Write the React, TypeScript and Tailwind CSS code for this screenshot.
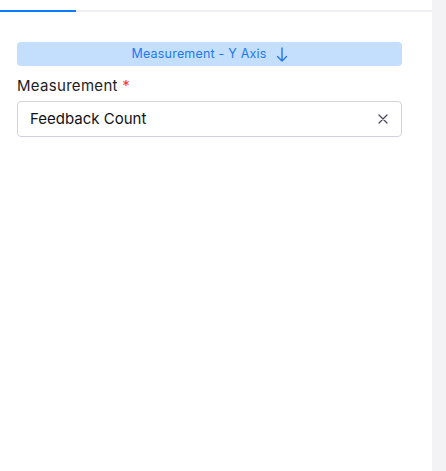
import React from "react";

export default function App() {
  return (
    <div className="flex h-[471px] w-[446px] bg-[#f3f3f5]" style={{ fontFamily: "Inter, 'Noto Sans', sans-serif" }}>
      <div className="flex h-full w-[432px] flex-col bg-white">
        <div className="mt-[10px] flex h-[2px] w-full bg-[#efeff3]">
          <div className="h-full w-[76px] bg-[#0a7cff]" />
        </div>
        <div className="px-[17px] pr-[30px] pt-[30px]">
          <div className="flex h-[24px] items-center justify-center gap-[9px] rounded-[4px] bg-[#c4dffd] text-[12.5px] tracking-[0.2px] text-[#1f78f0]">
            <span>Measurement - Y Axis</span>
            <svg width="12" height="15" viewBox="0 0 12 15" fill="none" stroke="#1f78f0" strokeWidth="1.4" strokeLinecap="round" strokeLinejoin="round">
              <path d="M6 1v13M1.5 9.5L6 14l4.5-4.5" />
            </svg>
          </div>
          <div className="mt-[11px] text-[15px] leading-[18px] tracking-[0.3px] text-[#1c1c24]">
            Measurement <span className="text-[#f0401c]">*</span>
          </div>
          <div className="mt-[6px] flex h-[36px] items-center justify-between rounded-[4px] border border-[#d3d3de] pl-[12px] pr-[13px]">
            <span className="text-[15px] text-[#111118]">Feedback Count</span>
            <svg width="10" height="10" viewBox="0 0 10 10" stroke="#4a4a66" strokeWidth="1.3" strokeLinecap="round">
              <path d="M1 1l8 8M9 1l-8 8" />
            </svg>
          </div>
        </div>
      </div>
    </div>
  );
}
